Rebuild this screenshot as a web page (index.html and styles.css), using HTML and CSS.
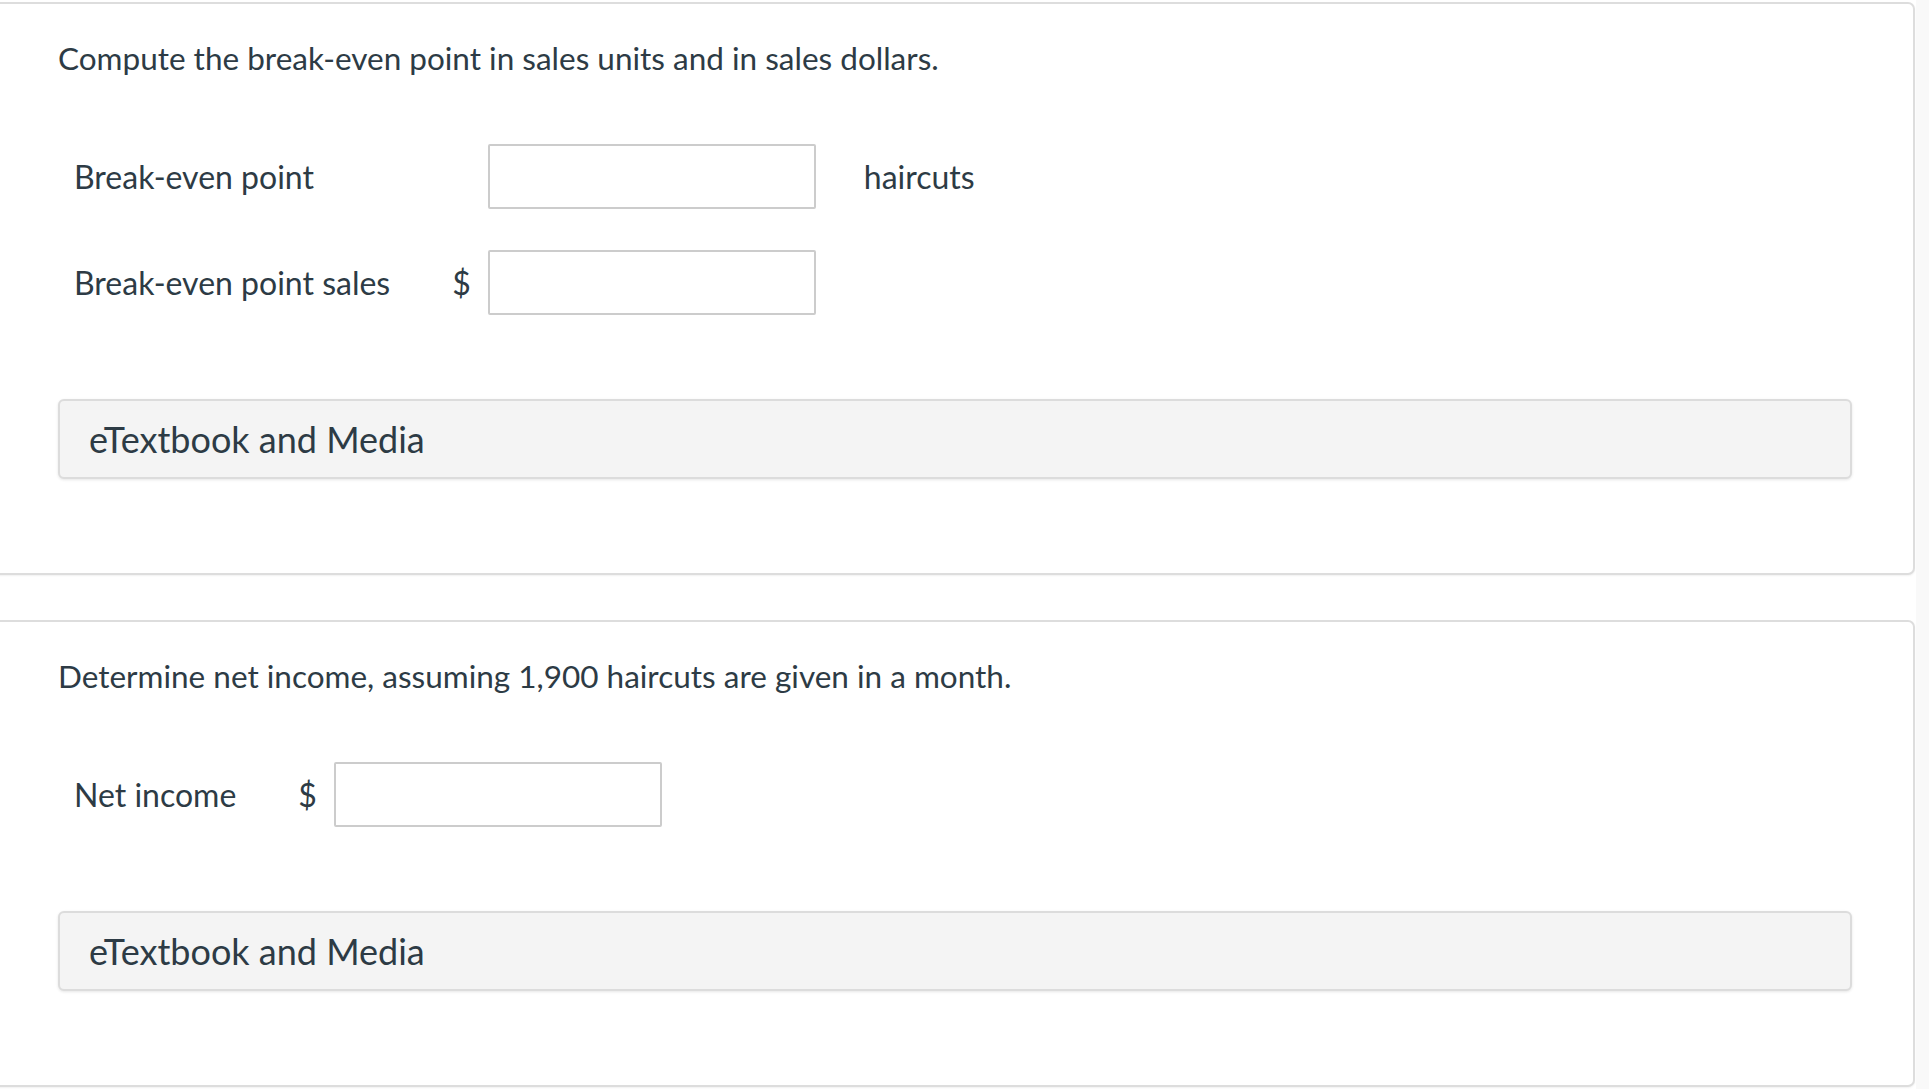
FILE: index.html
```html
<!DOCTYPE html>
<html lang="en">
<head>
<meta charset="utf-8">
<title>Break-even</title>
<link rel="stylesheet" href="styles.css">
</head>
<body>
<div class="page">
  <main class="main">
    <section class="card">
      <p class="prompt">Compute the break-even point in sales units and in sales dollars.</p>
      <div class="form-grid">
        <div class="label">Break-even point</div>
        <div class="sign"></div>
        <div class="field"><input class="answer" type="text" aria-label="Break-even point"></div>
        <div class="unit">haircuts</div>

        <div class="label">Break-even point sales</div>
        <div class="sign">$</div>
        <div class="field"><input class="answer" type="text" aria-label="Break-even point sales"></div>
        <div class="unit"></div>
      </div>
      <div class="media">eTextbook and Media</div>
    </section>

    <section class="card card-second">
      <p class="prompt">Determine net income, assuming 1,900 haircuts are given in a month.</p>
      <div class="form-grid">
        <div class="label">Net income</div>
        <div class="sign">$</div>
        <div class="field"><input class="answer" type="text" aria-label="Net income"></div>
        <div class="unit"></div>
      </div>
      <div class="media">eTextbook and Media</div>
    </section>
  </main>
  <aside class="strip"></aside>
</div>
</body>
</html>
```
FILE: styles.css
```css
html, body {
  margin: 0;
  padding: 0;
  background: #ffffff;
}

body {
  font-family: Lato, "Open Sans", "Liberation Sans", sans-serif;
  color: #2d3b45;
  overflow: hidden;
}

.page {
  display: flex;
  height: 1089px;
}

.main {
  flex: 1;
  padding-top: 2px;
  overflow: hidden;
}

.strip {
  width: 13px;
  background: #f9f9f9;
}

.card {
  margin: 0 1px 0 -8px;
  border: 2px solid #dddddd;
  border-radius: 7px;
  background: #fff;
  padding: 35px 61px 94px 64px;
  box-shadow: 0 1px 2px rgba(0, 0, 0, 0.06);
}

.card-second {
  margin-top: 45px;
}

.prompt {
  margin: 0;
  font-size: 31.5px;
  line-height: 38px;
}

.form-grid {
  display: grid;
  grid-template-columns: auto auto auto auto;
  justify-content: start;
  align-items: center;
  row-gap: 41px;
  margin: 67px 0 0 16px;
}

.label {
  font-size: 32px;
  padding-right: 62px;
}

.sign {
  font-size: 32px;
  padding-right: 17px;
}

.field {
  display: flex;
}

.answer {
  box-sizing: border-box;
  width: 328px;
  height: 65px;
  margin: 0;
  border: 2px solid #cccccc;
  border-radius: 2px;
  background: #fff;
  font: inherit;
}

.unit {
  font-size: 32px;
  padding-left: 48px;
}

.media {
  margin-top: 84px;
  box-sizing: border-box;
  height: 80px;
  display: flex;
  align-items: center;
  padding-left: 29px;
  background: #f4f4f4;
  border: 2px solid #dcdcdc;
  border-radius: 6px;
  box-shadow: 0 1px 3px rgba(0, 0, 0, 0.1);
  font-size: 36px;
}
```
